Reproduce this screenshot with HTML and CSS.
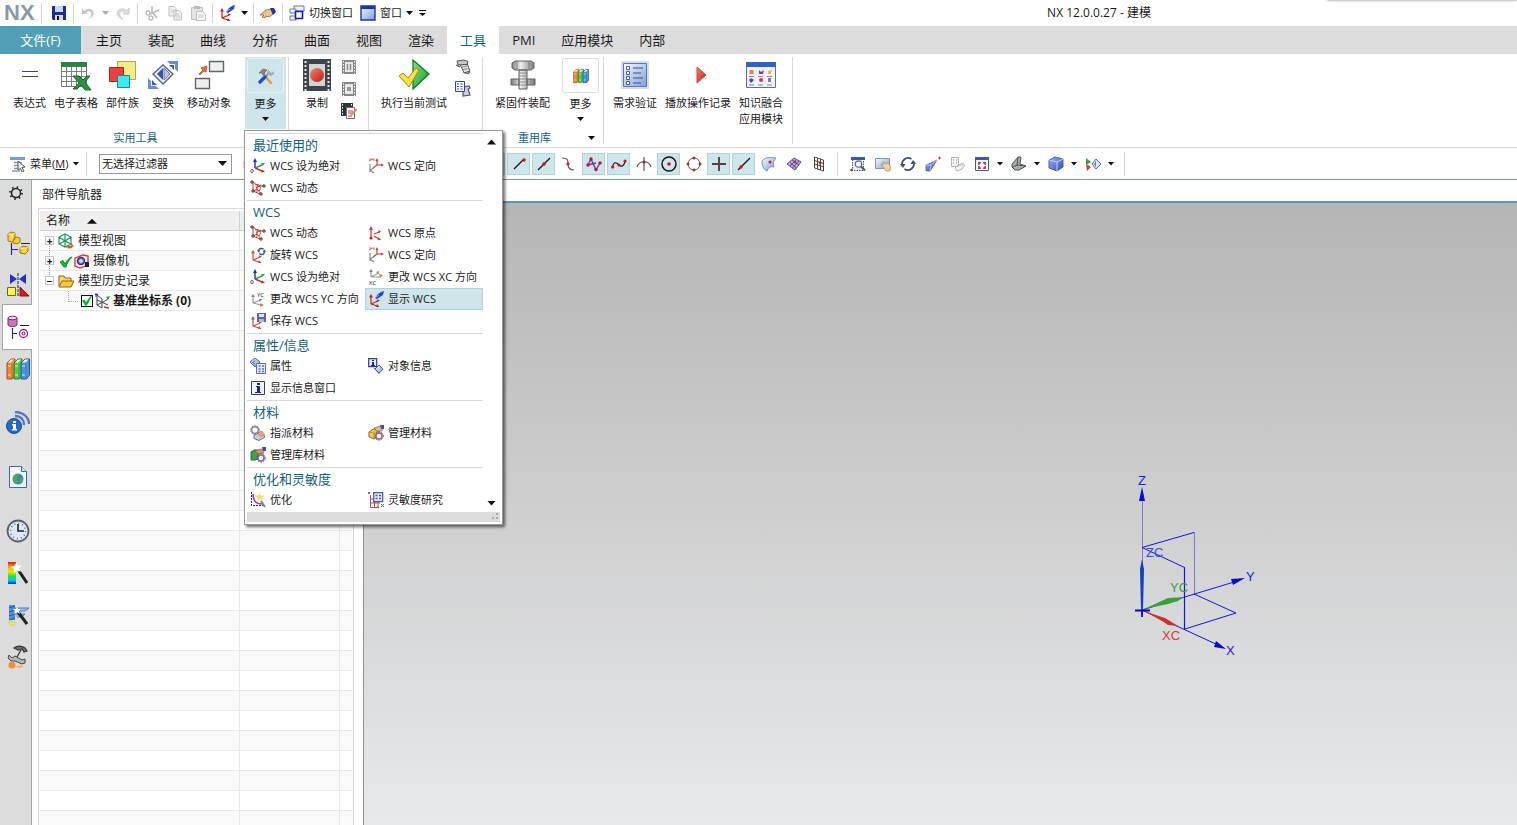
FILE: index.html
```html
<!DOCTYPE html>
<html lang="zh-CN">
<head>
    <meta charset="UTF-8">
    <meta name="viewport" content="width=device-width, initial-scale=1.0">
    <title>NX 12.0.0.27 - 建模</title>
    <link rel="stylesheet" href="styles.css">
</head>
<body>
    <!-- 图标库 -->
    <svg class="icon-defs" aria-hidden="true">
        <defs>
            <linearGradient id="g-blue" x1="0" y1="0" x2="1" y2="1"><stop offset="0" stop-color="#f4f8ff"/><stop offset="1" stop-color="#7e9fdc"/></linearGradient>
            <linearGradient id="g-deep" x1="0" y1="0" x2="1" y2="1"><stop offset="0" stop-color="#9db4f4"/><stop offset="1" stop-color="#3448b4"/></linearGradient>
            <linearGradient id="g-green" x1="0" y1="0" x2="1" y2="1"><stop offset="0" stop-color="#8ce08c"/><stop offset="1" stop-color="#0c9a28"/></linearGradient>
            <linearGradient id="g-red" x1="0" y1="0" x2="1" y2="1"><stop offset="0" stop-color="#f08070"/><stop offset="1" stop-color="#c01c14"/></linearGradient>
            <linearGradient id="g-steel" x1="0" y1="0" x2="1" y2="0"><stop offset="0" stop-color="#777"/><stop offset=".4" stop-color="#eee"/><stop offset="1" stop-color="#777"/></linearGradient>
            <linearGradient id="g-rainbow" x1="0" y1="0" x2="0" y2="1"><stop offset="0" stop-color="#f01010"/><stop offset=".25" stop-color="#ffb000"/><stop offset=".45" stop-color="#e8f000"/><stop offset=".65" stop-color="#20e040"/><stop offset=".82" stop-color="#10c8f0"/><stop offset="1" stop-color="#1030f0"/></linearGradient>
        </defs>

        <!-- 快速访问 -->
        <symbol id="save" viewBox="0 0 16 16"><path d="M1 1h14v14H2l-1-1z" fill="#1c2c90"/><path d="M4 1h8v6H4z" fill="#c8d8f4"/><path d="M4 10h8v5H4z" fill="#d8d8d8"/><path d="M6 11h2v4H6z" fill="#111"/></symbol>
        <symbol id="undo" viewBox="0 0 16 16"><path d="M2 3v6h6L6 7c3-2 6 0 5 3 0 2-1 3-3 4 5-1 7-5 5-8-2-3-6-3-9 0z" fill="#c6c6c6"/></symbol>
        <symbol id="redo" viewBox="0 0 16 16"><path d="M14 3v6H8l2-2C7 5 4 7 5 10c0 2 1 3 3 4C3 13 1 9 3 6c2-3 6-3 9 0z" fill="#e0e0e0" stroke="#bbb" stroke-width=".7"/></symbol>
        <symbol id="cut" viewBox="0 0 16 16"><path d="M8 1v8M15 5L6 9M9 8l4 5" fill="none" stroke="#bdbdbd" stroke-width="1.6"/><circle cx="4" cy="8" r="2" fill="none" stroke="#bdbdbd" stroke-width="1.4"/><circle cx="7" cy="13" r="2" fill="none" stroke="#bdbdbd" stroke-width="1.4"/></symbol>
        <symbol id="copy" viewBox="0 0 16 16"><path d="M2 1.500h5l2 2V11H2zM7 5.500h5l2.500 2.500v7H7z" fill="#f2f2f2" stroke="#bebebe"/><path d="M9 9h3M9 11h4M9 13h4M3.500 5h3M3.500 7h3" stroke="#c8c8c8"/></symbol>
        <symbol id="paste" viewBox="0 0 16 16"><path d="M1.500 2.500h11v12h-11z" fill="#e4e4e4" stroke="#bebebe"/><path d="M4 1h6v3H4z" fill="#bbb"/><path d="M6.500 6.500h6l3 3v6h-9z" fill="#f6f6f6" stroke="#bebebe"/><path d="M8 10h5M8 12h5" stroke="#c4c4c4"/></symbol>
        <symbol id="hand" viewBox="0 0 16 16"><path d="M0 10l6-5 5-1 2 5-4 3-3-1-1 2-3-1 2-2z" fill="#f0c48c" stroke="#7a5530" stroke-width=".7"/><path d="M10 3h4l2 4-3 3z" fill="#1c34b0"/></symbol>
        <symbol id="switch" viewBox="0 0 16 16"><path d="M5 1h10v5H5z" fill="#eef2f8" stroke="#667c98"/><path d="M1 4h6v4H1zM1 11h6v4H1z" fill="#eef2f8" stroke="#667c98"/><path d="M6.500 6.500h7v7h-7z" fill="#fff" stroke="#1020c0" stroke-width="1.600"/></symbol>
        <symbol id="window" viewBox="0 0 16 16"><path d="M1 1h14v14H1z" fill="url(#g-blue)" stroke="#1838a8" stroke-width="1.400"/><path d="M1 1h14v3H1z" fill="#1838a8"/></symbol>

        <!-- WCS 系列 -->
        <symbol id="tripod" viewBox="0 0 16 16"><path d="M3 13V5M3 13l7-3M3 13l6 2" fill="none" stroke="currentColor" stroke-width="1.200"/><path d="M3 3L1 6.500h4zM12 9L8.500 8.500l1 2.800zM11.500 16L8 16l1-3z" fill="currentColor"/></symbol>
        <symbol id="wcs-abs" viewBox="0 0 16 16"><path d="M5 10V3" stroke="#2030b0" stroke-width="1.400"/><path d="M5 0L3 4h4z" fill="#2030b0"/><path d="M5 10l7-3" stroke="#30a050" stroke-width="1.400"/><path d="M15 5l-4 0 1.500 3z" fill="#30a050"/><path d="M5 10l7 3" stroke="#c82828" stroke-width="1.400"/><path d="M15 14l-4 .5 1.400-3z" fill="#c82828"/><ellipse cx="2" cy="13" rx="1.200" ry="1.800" fill="none" stroke="#555" stroke-width=".9"/></symbol>
        <symbol id="wcs-orient" viewBox="0 0 16 16"><path d="M9 7V2M9 7h5M9 7l-4 3" stroke="#c43c3c" stroke-width="1.200" fill="none"/><path d="M9 0L7.500 3h3zM16 7l-3-1.500v3z" fill="#c43c3c"/><path d="M1 1h5v2M1 3l4-2" stroke="#e08060" fill="none" stroke-width="1.200"/><path d="M2 6v8M2 12l4-2M2 12l4 3" stroke="#888" fill="none" stroke-width="1.200"/></symbol>
        <symbol id="wcs-dyn" viewBox="0 0 16 16"><path d="M3 2l5 4 5 0M3 11V3M3 11l4-2 4 5M3 11l7 3M5 5c5-2 7 3 4 6M6 8l5-3M7 6v6" stroke="#c03830" fill="none"/><path d="M1 1h2v2H1zM13 5h2v2h-2zM2 10h2v2H2zM10 13h2v2h-2z" fill="#fff" stroke="#4a3020"/></symbol>
        <symbol id="wcs-origin" viewBox="0 0 16 16"><path d="M3 12V4M6 9l5-2M6 11l5 3" stroke="#c43c3c" fill="none" stroke-width="1.200"/><path d="M3 1L1 5h4zM13 6l-3-.5 1 3zM13 15l-3.500 0 1-3z" fill="#c43c3c"/><circle cx="3" cy="13" r="1.600" fill="#d02020"/></symbol>
        <symbol id="wcs-rotate" viewBox="0 0 16 16"><use href="#tripod" color="#c45048"/><circle cx="11.500" cy="4.500" r="3" fill="none" stroke="#3c58a8" stroke-width="1.400" stroke-dasharray="7 2"/><path d="M7 3l3 0-1 3zM16 5l-3 0 1-3z" fill="#3c58a8"/></symbol>
        <symbol id="wcs-show" viewBox="0 0 16 16"><use href="#tripod" color="#c82020"/><path d="M7 7l3-4 3-2 3-1-1 4-3 2-3 2z" fill="#2848c8"/><path d="M7 7l4-3" stroke="#9ab4ff"/></symbol>
        <symbol id="wcs-save" viewBox="0 0 16 16"><use href="#tripod" color="#c45048"/><path d="M7 0h9v9H7z" fill="#5c689c"/><path d="M9 1h5v3H9z" fill="#dfe6f6"/><path d="M9 6h5v3H9z" fill="#bbb"/></symbol>

        <!-- 菜单其它图标 -->
        <symbol id="prop" viewBox="0 0 16 16"><path d="M5 0l5 4-5 5-5-5z" fill="url(#g-blue)" stroke="#4c5890"/><path d="M5 2.500L3 4.500 5 6.500" fill="none" stroke="#223080"/><path d="M6.500 5.500h9v10h-9z" fill="#e4eafa" stroke="#5c6cb0"/><path d="M8.500 8h2M8.500 11h2M8.500 13.500h2M12 8h2M12 11h2M12 13.500h2" stroke="#6070b0" stroke-width="1.400"/></symbol>
        <symbol id="objinfo" viewBox="0 0 16 16"><path d="M.700.700h8v8h-8z" fill="#e4eafa" stroke="#343c80" stroke-width="1.200"/><path d="M4 2h2v1H4zM4 4h2v3h1v1H3V7h1z" fill="#202860"/><path d="M11 7l4 4-4 4.500-4-4.500z" fill="url(#g-blue)" stroke="#4c5890"/><path d="M6 10l5 5" stroke="#4c5890"/></symbol>
        <symbol id="info" viewBox="0 0 16 16"><path d="M1.500 1.500h13v13h-13z" fill="#eef0fa" stroke="#343c80"/><path d="M7 3h3v2H7zM6 6h4v6h1v1H5v-1h2V7H6z" fill="#202860"/></symbol>
        <symbol id="mat-assign" viewBox="0 0 16 16"><path d="M4 10l7-3 4 5-6 3.500-5-2z" fill="#c4ccd8" stroke="#6c7480"/><path d="M7 8l5-2 3 4-4 1.500z" fill="#f0a070" stroke="#a07050" stroke-width=".5"/><circle cx="5" cy="5" r="3.300" fill="#fff" stroke="#9c7c90" stroke-width="1.400"/><circle cx="5" cy="5" r="4.300" fill="none" stroke="#6c6c88" stroke-width="1" stroke-dasharray="1.500 1.200"/></symbol>
        <symbol id="mat-manage" viewBox="0 0 16 16"><path d="M1 7l4-3 6 1v6l-5 3-5-2z" fill="#f0c848" stroke="#8c6c20"/><path d="M1 7l5 1 5-3M6 8v6" fill="none" stroke="#b08c30" stroke-width=".7"/><path d="M6 3l6-2 3 1-1 4-5 0z" fill="#e8b890" stroke="#705040" stroke-width=".6"/><path d="M12 0h4v4h-3z" fill="#3c50b0"/><circle cx="11" cy="11" r="3" fill="#fff" stroke="#a06080" stroke-width="1.500"/><circle cx="11" cy="11" r="4.200" fill="none" stroke="#5c5088" stroke-width="1" stroke-dasharray="1.500 1.200"/></symbol>
        <symbol id="mat-lib" viewBox="0 0 16 16"><path d="M1 5l3-2h4v9l-3 1H1z" fill="#40a048" stroke="#286830"/><path d="M5 4l6-2 3 1-1 4-5 0z" fill="#d8905c" stroke="#705040" stroke-width=".6"/><path d="M12 0h4v4h-3z" fill="#3c50b0"/><circle cx="11" cy="11" r="3" fill="#fff" stroke="#8068b0" stroke-width="1.500"/><circle cx="11" cy="11" r="4.200" fill="none" stroke="#5c5088" stroke-width="1" stroke-dasharray="1.500 1.200"/></symbol>
        <symbol id="optim" viewBox="0 0 16 16"><path d="M1.500 0v13.500H14" fill="none" stroke="#333" stroke-dasharray="2 1"/><path d="M3 2c0 7 3 10 9 10" fill="none" stroke="#b83890" stroke-width="1.600"/><path d="M10 1l1 3 4-1-3 3 2 3-4-2-3 2 1-3-3-2 4-1z" fill="#ece060"/><path d="M11 9l4 6" stroke="#7080d0" stroke-width="2"/></symbol>
        <symbol id="sens" viewBox="0 0 16 16"><path d="M2.500 3v12.500H11M2.500 7H6M2.500 11H12M6.500 5v10M10 10v5" fill="none" stroke="#b05048"/><path d="M5.700.700h9v9h-9z" fill="#e4eafa" stroke="#4c549c" stroke-width="1.200"/><path d="M7.500 3.500h2M11 3.500h2M7.500 6.500h2M11 6.500h2" stroke="#4c549c" stroke-width="1.600"/><path d="M0 0l1 2 1-2M13 12l3 3M16 12l-3 3" stroke="#333" fill="none" stroke-width=".8"/></symbol>

        <!-- 功能区大图标 -->
        <symbol id="expr" viewBox="0 0 32 32"><path d="M8 12.500h16M8 17.500h16" stroke="#3c4468" stroke-width="1.200"/></symbol>
        <symbol id="sheet" viewBox="0 0 32 32"><path d="M1.500 3.500h25v24h-25z" fill="#fff" stroke="#777"/><path d="M1.500 12.500h25M1.500 17.500h25M1.500 22.500h25M6.500 8v19.500M11.500 8v19.500M16.500 8v19.500M21.500 8v19.500" stroke="#808080"/><path d="M1 3h26v5H1z" fill="#2e8040"/><path d="M13 17h6l4 4 4-4h3l-5 6 6 8h-6l-4-5-4 4h-4l6-6z" fill="#2f9048" stroke="#1f6830"/></symbol>
        <symbol id="family" viewBox="0 0 32 32"><path d="M10.500 2.500h18v18h-18z" fill="#f0ee88" stroke="#b0a850"/><path d="M2.500 8.500h14v14h-14z" fill="#ee4040" stroke="#a02828"/><path d="M10.500 16.500h12v12h-12z" fill="#3cecec" stroke="#208888"/></symbol>
        <symbol id="transform" viewBox="0 0 32 32"><path d="M16 6l10 9-10 10L6 15z" fill="#e8edf8" stroke="#5a6488" stroke-width="1.400"/><path d="M16 9v12l-6-6z" fill="#3c50a8"/><path d="M17 9v12l6-6z" fill="#b8c6ea" stroke="#56649c" stroke-width=".8"/><path d="M20 2h11v11l-3-3V5h-5zM1 19l3 3v5h5l3 3H1z" fill="#6c8cd4"/><path d="M22 6h5v5l-2-2V8h-1zM5 21l2 2v1h1l2 2H5z" fill="#3c5cb4"/></symbol>
        <symbol id="move" viewBox="0 0 32 32"><path d="M16.500 2.500h14v10h-14zM2.500 19.500h14v10h-14z" fill="#eee" stroke="#606864" stroke-width="1.400"/><path d="M6 15l4-4-2-2 6-2-1 6-2-1-4 4z" fill="#e87038" stroke="#a04820" stroke-width=".7"/></symbol>
        <symbol id="tools" viewBox="0 0 16 16"><path d="M5 6l8 9" stroke="#e0a030" stroke-width="2.600" stroke-linecap="round"/><path d="M1 5l4-4 4 1-2 2-1 3-2-2z" fill="#888" stroke="#555" stroke-width=".6"/><path d="M12 4L7 9" stroke="#999" stroke-width="2"/><path d="M11 1v3l3 1 2-2v3l-3 2-3-1-1-3z" fill="#aaa"/><path d="M7 9l-5 5" stroke="#1c48d8" stroke-width="3.200" stroke-linecap="round"/></symbol>
        <symbol id="record" viewBox="0 0 32 32"><path d="M2 0h28v32H2z" fill="#3e4448"/><path d="M4.500 2v30M27.500 2v30" stroke="#e8e8e8" stroke-width="2" stroke-dasharray="2 2"/><path d="M8 5h16v22H8z" fill="#ced6d6"/><circle cx="16" cy="16" r="7" fill="url(#g-red)"/></symbol>
        <symbol id="film-pause" viewBox="0 0 16 16"><path d="M1 1h14v14H1z" fill="#888"/><path d="M2.500 2v13M13.500 2v13" stroke="#fff" stroke-dasharray="1.500 1.500"/><path d="M4 3h8v10H4z" fill="#e8e8e8"/><path d="M6.500 5v6M9.500 5v6" stroke="#888" stroke-width="1.400"/></symbol>
        <symbol id="film-stop" viewBox="0 0 16 16"><path d="M1 1h14v14H1z" fill="#888"/><path d="M2.500 2v13M13.500 2v13" stroke="#fff" stroke-dasharray="1.500 1.500"/><path d="M4 3h8v10H4z" fill="#e8e8e8"/><path d="M6 6h4v4H6z" fill="#999"/></symbol>
        <symbol id="film-edit" viewBox="0 0 16 16"><path d="M0 0h12v13H0z" fill="#333"/><path d="M1.500 1v12M10.500 1v3" stroke="#fff" stroke-dasharray="1.500 1.500"/><path d="M5.500 4.500h8v11h-8z" fill="#fff" stroke="#6c6ca0"/><path d="M7 8h5M7 10h5M7 13h4" stroke="#c04030"/><path d="M16 6l-6 6" stroke="#e09030" stroke-width="2"/></symbol>
        <symbol id="run-test" viewBox="0 0 32 32"><path d="M15 1l16 14-16 15z" fill="url(#g-green)" stroke="#0c7820" stroke-width="1.200"/><path d="M1 17l4-3 5 5L18 9l3 2L11 28z" fill="#f8e048" stroke="#a88818"/></symbol>
        <symbol id="journal" viewBox="0 0 16 16"><path d="M5 5l7-1 3 8-6 2z" fill="#e0e0e4" stroke="#55555c"/><path d="M2 2l7-1 4 1.500-1 3-3 0L3 6z" fill="#c4c4ca" stroke="#55555c"/><path d="M7 8l5-1M8 10.500l5-1" stroke="#88888e"/><path d="M1 6l4 2M9 13.500l4 1 2-2" stroke="#55555c" fill="none" stroke-width="1.200"/></symbol>
        <symbol id="journal-list" viewBox="0 0 16 16"><path d="M8 6l6-1 1 2-2 1 2 6-7 1z" fill="#d0d0d4" stroke="#55555c" stroke-width="1.200"/><path d="M.500.500h9v10h-9z" fill="#f0f4ff" stroke="#3c4498"/><path d="M2 3h2M2 5.500h2M2 8h2M5.500 3h2M5.500 5.500h2M5.500 8h2" stroke="#3c58b8"/></symbol>
        <symbol id="bolt" viewBox="0 0 32 32"><path d="M5 4l3-2h16l3 2v5l-3 2H8L5 9zM12 11h8v19h-8zM4 20h8v6H4zM20 20h8v6h-8z" fill="url(#g-steel)" stroke="#606060"/><path d="M10 2v9M22 2v9M12 14h8M12 17h8M12 20h8M12 23h8M12 26h8" stroke="#777" stroke-width=".8"/></symbol>
        <symbol id="books" viewBox="0 0 24 24"><path d="M1 6l4-4h4v16l-3 4H1z" fill="#f08838" stroke="#a05010"/><path d="M8 6l4-4h4v16l-3 4H8z" fill="#58c848" stroke="#207c20"/><path d="M15 6l4-4h4.500v16l-3 4H15z" fill="#4c94e0" stroke="#1c509c"/><path d="M2 5.500l3-3h3l-3 3zM9 5.500l3-3h3l-3 3zM16 5.500l3-3h3.500l-3 3z" fill="#fff4e8"/><path d="M6 7v14M13 7v14M20 7v14" stroke="#345" stroke-opacity=".4" stroke-width=".8"/><path d="M2 9h3M9 9h3M16 9h3M2 18h3M9 18h3M16 18h3" stroke="#fff" stroke-opacity=".8"/></symbol>
        <symbol id="require" viewBox="0 0 32 32"><path d="M2 2h28v28H2z" fill="#d8dce6"/><path d="M4.500 4.500h23v23h-23z" fill="url(#g-blue)" stroke="#5a78b0"/><path d="M7.500 7.500h3v3h-3zM7.500 12.500h3v3h-3zM7.500 17.500h3v3h-3zM7.500 22.500h3v3h-3z" fill="#fff" stroke="#4c6090"/><path d="M14 9h10M14 14h8M14 19h10M14 24h8" stroke="#3c5080" stroke-width="1.200"/></symbol>
        <symbol id="play" viewBox="0 0 32 32"><path d="M15 8l9 8-9 8z" fill="url(#g-red)" stroke="#d04040"/></symbol>
        <symbol id="knowledge" viewBox="0 0 32 32"><path d="M1.500 3.500h29v25h-29z" fill="#eef2fc" stroke="#5c6ca8"/><path d="M1 3h30v5H1z" fill="#3060c8"/><path d="M4.500 11h4v4h-4z" fill="#f08030"/><path d="M14 15v-4l2 2 3-2-1 4z" fill="#a03080"/><path d="M23 12l4-1-1 4h-3z" fill="#f0b838"/><path d="M6 19l3 2-3 3-2-3z" fill="#5838d0"/><circle cx="16" cy="21" r="2" fill="#d03848"/><path d="M23 19h3v4h-3z" fill="#a86888"/><path d="M4 17.500h5M13 17.500h5M22 17.500h5M4 26h5M13 26h5M22 26h5" stroke="#888"/></symbol>

        <!-- 选择条 -->
        <symbol id="menu-icon" viewBox="0 0 16 16"><path d="M0 1h15v3H0z" fill="#7c9cd0"/><path d="M4 6.500h8M4 9.500h8M4 12.500h7M2 15h8" stroke="#8c98a8" stroke-width="1.400"/><path d="M8 5l7 6-3 .5 2 3.500-2 1-1.500-3.500L8 14z" fill="#eee" stroke="#555"/></symbol>
        <symbol id="cube-dim" viewBox="0 0 16 16"><path d="M2 5l6-3 6 3v7l-6 3-6-3zM2 5l6 3 6-3M8 8v7" fill="#f2f2f2" stroke="#b0b0b0"/></symbol>
        <symbol id="s-end" viewBox="0 0 16 16"><path d="M3 13L12 4" stroke="#111" stroke-width="1.200"/><circle cx="13" cy="4" r="1.700" fill="#c81818"/></symbol>
        <symbol id="s-mid" viewBox="0 0 16 16"><path d="M2 14L14 2" stroke="#111" stroke-width="1.200"/><circle cx="8" cy="8" r="1.800" fill="#c81818"/></symbol>
        <symbol id="s-ctrl" viewBox="0 0 16 16"><path d="M1 2c6 0 6 2 6 6s2 6 6 6" fill="none" stroke="#555" stroke-width="1.200"/><circle cx="7" cy="8" r="1.600" fill="#c81818"/></symbol>
        <symbol id="s-poly" viewBox="0 0 16 16"><path d="M2 9L5 3l5 11 4-7M2 9l8-2" fill="none" stroke="#7038b0" stroke-width="1.400"/><g fill="#b81838"><circle cx="2" cy="9" r="1.700"/><circle cx="5" cy="3" r="1.700"/><circle cx="10" cy="13.500" r="1.700"/><circle cx="14" cy="7" r="1.700"/></g></symbol>
        <symbol id="s-spline" viewBox="0 0 16 16"><path d="M1 12c2-8 5-5 7-3s5 2 6-4" fill="none" stroke="#111" stroke-width="1.200"/><g fill="#c81818"><circle cx="1.700" cy="11" r="1.600"/><circle cx="8" cy="9" r="1.600"/><circle cx="14" cy="5" r="1.600"/></g></symbol>
        <symbol id="s-int" viewBox="0 0 16 16"><path d="M1 11c2-7 12-7 14 0M8 1v14" fill="none" stroke="#555" stroke-width="1.200"/><circle cx="8" cy="6" r="1.600" fill="#c81818"/></symbol>
        <symbol id="s-center" viewBox="0 0 16 16"><circle cx="8" cy="8" r="7" fill="none" stroke="#111" stroke-width="1.400"/><circle cx="8" cy="8" r="1.800" fill="#c81818"/></symbol>
        <symbol id="s-quad" viewBox="0 0 16 16"><circle cx="8" cy="8" r="6" fill="none" stroke="#555"/><g fill="#c82828"><circle cx="8" cy="2" r="1.500"/><circle cx="8" cy="14" r="1.500"/><circle cx="2" cy="8" r="1.500"/><circle cx="14" cy="8" r="1.500"/></g></symbol>
        <symbol id="s-point" viewBox="0 0 16 16"><path d="M8 1v14M1 8h14" stroke="#111" stroke-width="1.400"/><circle cx="8" cy="8" r="1.500" fill="#c81818"/></symbol>
        <symbol id="s-oncurve" viewBox="0 0 16 16"><path d="M2 14L14 2" stroke="#111" stroke-width="1.200"/><circle cx="5" cy="11" r="1.700" fill="#c81818"/></symbol>
        <symbol id="s-face" viewBox="0 0 16 16"><path d="M1 5c3-4 8-4 14-3-3 3-3 6-2 9-4-1-6 1-7 4-4-2-5-6-5-10z" fill="url(#g-blue)" stroke="#7890c0"/><circle cx="9" cy="6" r="1.500" fill="#c82828"/></symbol>
        <symbol id="s-facet" viewBox="0 0 16 16"><path d="M8 2l7 4-6 8-8-6z" fill="#b8b0dc" stroke="#58489c"/><path d="M6 4l7 5M3.500 6l7 6M10.500 3.500L4 10M13 5L6.500 12" stroke="#58489c"/><circle cx="9" cy="6" r="1.400" fill="#c82828"/></symbol>
        <symbol id="s-grid" viewBox="0 0 16 16"><path d="M3.500 1l9 3v11l-9-3zM3.500 4.500l9 3M3.500 8l9 3M6.500 2v11M9.500 3v11" fill="none" stroke="#444"/><circle cx="9" cy="7" r="1.400" fill="#c82828"/></symbol>
        <symbol id="v-fit" viewBox="0 0 16 16"><path d="M2.500 3.500h11v11h-11z" fill="#e8eef8" stroke="#3858b0" stroke-dasharray="1.500 1"/><path d="M1 1h14v3H1z" fill="#3858b0"/><circle cx="8.500" cy="8" r="3.200" fill="#fff" stroke="#667" stroke-width="1.200"/><path d="M11 10.500l4 4" stroke="#556" stroke-width="2"/><circle cx="1.500" cy="14" r="1.300" fill="#d02828"/></symbol>
        <symbol id="v-pan" viewBox="0 0 16 16"><path d="M.500 2.500h14v10h-14z" fill="url(#g-blue)" stroke="#8890b0"/><path d="M6 8l2 1V6l1.500 0 1 2L13 7l2.500 3-.5 5h-4z" fill="#f0d0a0" stroke="#b08850" stroke-width=".7"/></symbol>
        <symbol id="v-rotate" viewBox="0 0 16 16"><path d="M2.500 10a6 6 0 0 1 9-7M13.500 6a6 6 0 0 1-9 7" fill="none" stroke="#3c5080" stroke-width="1.800"/><path d="M0 8h5.500L3 12zM16 8h-5.500L13 4z" fill="#3c5080"/></symbol>
        <symbol id="v-persp" viewBox="0 0 16 16"><path d="M1 9l5-2 6-3-5 8-2 3H1z" fill="url(#g-deep)" stroke="#3c4c98" stroke-width=".7"/><path d="M1 9h5l6-5M6 9l-1 6" fill="none" stroke="#dfe6ff" stroke-width=".7"/><path d="M13 2h3M14.500.500v3" stroke="#d04040"/></symbol>
        <symbol id="v-dim" viewBox="0 0 16 16"><path d="M1.500 1.500h7v9h-7zM5 12l3-3h7l-3 4-5 2zM8 9l6-2" fill="#f4f4f4" stroke="#b4b4b4"/><path d="M3 4h1M6 4h1M3 7h1M6 7h1" stroke="#aaa" stroke-width="1.400"/></symbol>
        <symbol id="v-full" viewBox="0 0 16 16"><path d="M1.500 1.500h13v13h-13z" fill="#f4f6ff" stroke="#3c58b0"/><path d="M1 1h14v3H1z" fill="#3c58b0"/><path d="M4 6h3v1L5 9H4zM12 6H9v1l2 2h1zM4 13h3v-1l-2-2H4zM12 13H9v-1l2-2h1z" fill="#d04030"/></symbol>
        <symbol id="v-clip" viewBox="0 0 16 16"><path d="M1 8l6-7 3 0-1 7 6 2-7 4H4L1 11z" fill="#a8acac" stroke="#505454"/><path d="M7 1L6 9l9 1M1 11l6-2" fill="none" stroke="#505454"/></symbol>
        <symbol id="v-cube" viewBox="0 0 16 16"><path d="M1 4l6-3 8 2v8l-6 4-8-3z" fill="url(#g-deep)" stroke="#4c5ca8"/><path d="M1 4l8 2 6-3M9 6v9" fill="none" stroke="#c4d0f4"/></symbol>
        <symbol id="v-section" viewBox="0 0 16 16"><path d="M1 2l5 4-5 3z" fill="#30a040"/><path d="M1 8l5 3-4 4z" fill="#d03830"/><path d="M11 3l5 5-5 5-4-5z" fill="#dce6f6" stroke="#5c6c98"/><path d="M11 5v6L9 8z" fill="#5c78b8"/></symbol>

        <!-- 导航树 -->
        <symbol id="t-view" viewBox="0 0 16 16"><path d="M7 1l6 3v7l-6 3-6-3V4zM1 4l6 4 6-4M7 1v13M1 11l6-3 6 3" fill="none" stroke="#1c9860" stroke-width="1.200"/><path d="M8 14l7-1-2-2M10 15l4-1" stroke="#d85830" fill="none" stroke-width="1.400"/></symbol>
        <symbol id="t-check" viewBox="0 0 16 16"><path d="M2 9l3-1.500L7 11c2-4 4-6 7-7-3 3-5 6-6 10H6z" fill="#18b838" stroke="#109028"/></symbol>
        <symbol id="t-camera" viewBox="0 0 16 16"><path d="M1 5l8-3 5 1v9l-8 3-5-2z" fill="#fbe8e8" stroke="#c83838" stroke-width="1.300"/><circle cx="7" cy="8" r="3.500" fill="#7888d8" stroke="#283088" stroke-width="1.400"/><path d="M11 9h4v5h-4z" fill="#222"/><path d="M5 8h4M7 6v4" stroke="#fff"/></symbol>
        <symbol id="t-folder" viewBox="0 0 16 16"><path d="M1 13V3h5l1 2h6v3" fill="#f8d868" stroke="#8c6410"/><path d="M1 14l3-6h12l-3 6z" fill="#fcc840" stroke="#8c6410"/></symbol>
        <symbol id="t-csys" viewBox="0 0 16 16"><path d="M2 2v10l5 3V6zM2 12l8-4 4-3M2 7l11 5" fill="none" stroke="#444"/><path d="M1 0v4M0 1.500h3" stroke="#2838c0"/><path d="M15 3l-4 1 2 3z" fill="#28a040"/><path d="M9 14l5 1" stroke="#d03030" stroke-width="1.600"/></symbol>

        <!-- 资源条 -->
        <symbol id="r-gear" viewBox="0 0 16 16"><circle cx="8" cy="8" r="4.500" fill="none" stroke="#222" stroke-width="1.500"/><circle cx="8" cy="8" r="6" fill="none" stroke="#222" stroke-width="1.800" stroke-dasharray="1.500 3.210"/></symbol>
        <symbol id="r-asm" viewBox="0 0 24 24"><path d="M2 3l3-2 4 1v6l-3 3-4-1zM7 8l3-2 4 1v4l-3 2-4-1zM14 17l3-2 5 1v4l-3 3-5-1z" fill="#f8cc30" stroke="#a07c10"/><path d="M2 3l4 1 3-2M6 4v6M14 17l5 1 3-2M19 18v4" fill="none" stroke="#fff0a0"/><path d="M5.500 12v12M6 18.500h6" stroke="#2028a0" stroke-width="1.200"/><path d="M15 12.500h9" stroke="#222"/></symbol>
        <symbol id="r-constraint" viewBox="0 0 24 24"><path d="M4 1l7 5-7 5zM20 1l-7 5 7 5z" fill="#2030c8"/><path d="M12 0v24" stroke="#222" stroke-dasharray="3 1"/><path d="M1.500 14.500h8v8h-8z" fill="#fcf440" stroke="#6c6820"/><path d="M14 14v9h9z" fill="#d02020" stroke="#901010"/></symbol>
        <symbol id="r-part" viewBox="0 0 24 24"><path d="M1 3v7c1 2 8 2 9 0V3z" fill="#c878b8" stroke="#7c2870"/><ellipse cx="5.500" cy="3" rx="4.500" ry="1.800" fill="#f4d0ec" stroke="#7c2870"/><path d="M5.500 13v11M6 18.500h4" stroke="#2028a0" stroke-width="1.200"/><path d="M13 10.500h9" stroke="#222"/><circle cx="16.500" cy="18.500" r="4" fill="#fff" stroke="#a02880" stroke-width="1.300"/><circle cx="16.500" cy="18.500" r="1.500" fill="none" stroke="#a02880" stroke-width="1.200"/></symbol>
        <symbol id="r-web" viewBox="0 0 24 24"><path d="M9 5c6 0 9 4 9 9M9 1c8 0 14 5 14 12" fill="none" stroke="#5078c0" stroke-width="2.400"/><circle cx="8" cy="15" r="7.500" fill="#2468c8" stroke="#184c9c"/><path d="M7 10h3v2H7zM6 13h4v5h1v1.500H6V18h1v-3.500H6z" fill="#fff"/></symbol>
        <symbol id="r-page" viewBox="0 0 24 24"><path d="M3.500 1.500h12l5 5v16h-17z" fill="#f4f8ff" stroke="#3c68b0"/><path d="M15.500 1.500v5h5" fill="#cfe0fa" stroke="#3c68b0"/><circle cx="12" cy="14" r="5.500" fill="#3c80c8"/><path d="M8 11c2-2 4-2 5-1l-2 3 1 3-2 3c-3-1-4-5-2-8zM14 12l3 1-1 4-3 1z" fill="#48b048"/></symbol>
        <symbol id="r-clock" viewBox="0 0 24 24"><circle cx="12" cy="12" r="10.500" fill="#dce8f6" stroke="#5c6068" stroke-width="1.800"/><circle cx="12" cy="12" r="7.500" fill="none" stroke="#667" stroke-width="1.600" stroke-dasharray="1 2.927"/><path d="M12 5v7h6" fill="none" stroke="#222" stroke-width="1.600"/></symbol>
        <symbol id="r-color" viewBox="0 0 24 24"><path d="M2 1h8v22H2z" fill="url(#g-rainbow)"/><path d="M11 7l10 15" stroke="#222" stroke-width="3"/><path d="M11 7l2 3" stroke="#fff" stroke-width="3"/><path d="M11 1l1 4 4-1-3 3 2 4-4-2-3 3 0-4-4-2 4-1z" fill="#fff"/></symbol>
        <symbol id="r-render" viewBox="0 0 24 24"><path d="M3 2h6v15H3z" fill="#4c90d8"/><path d="M3 5l6-2M3 9l6-2M3 13l6-2M3 17l6-2" stroke="#1c5aa8"/><path d="M9 5h14l-4 3h-9M9 11h10l-3 3h-5" fill="#9cbce8" stroke="#4878c0"/><path d="M2 20l4-2 4 2M4 22h5" stroke="#e8d840" fill="none" stroke-width="1.600"/><path d="M12 9l9 12" stroke="#222" stroke-width="3"/><path d="M11 3l1 3 3 0-2 2 1 3-3-2-3 2 1-3-2-2 3 0z" fill="#fff"/></symbol>
        <symbol id="r-tools" viewBox="0 0 24 24"><path d="M8 3c4-3 8-2 11 0l2 3-3 1-2-3-4 1zM15 5l-4 7" fill="#777" stroke="#333" stroke-width="1.200"/><path d="M3 10l3 3 3-2 7 4 3-1 0 4-3 1-7-3-4 0-3-3z" fill="#b0b8bc" stroke="#444"/><circle cx="6" cy="20" r="3.500" fill="#f09030"/><path d="M8 22l7-2 3 2-4 1z" fill="#f0b070"/></symbol>
    </svg>

    <!-- 标题栏 -->
    <header class="titlebar">
        <span class="logo">NX</span>
        <div class="quick">
            <button aria-label="保存"><svg><use href="#save"/></svg></button>
        </div>
        <div class="quick">
            <button aria-label="撤消"><svg><use href="#undo"/></svg></button>
            <button class="drop" aria-label="撤消列表"><i class="caret caret-dim"></i></button>
            <button aria-label="重做"><svg><use href="#redo"/></svg></button>
        </div>
        <div class="quick">
            <button aria-label="剪切"><svg><use href="#cut"/></svg></button>
            <button aria-label="复制"><svg><use href="#copy"/></svg></button>
            <button aria-label="粘贴"><svg><use href="#paste"/></svg></button>
        </div>
        <div class="quick">
            <button aria-label="显示 WCS"><svg><use href="#wcs-show"/></svg></button>
            <button class="drop" aria-label="重复命令"><i class="caret"></i></button>
        </div>
        <div class="quick">
            <button aria-label="触控"><svg><use href="#hand"/></svg></button>
        </div>
        <div class="quick last">
            <button class="with-text"><svg><use href="#switch"/></svg>切换窗口</button>
            <button class="with-text"><svg><use href="#window"/></svg>窗口<i class="caret"></i></button>
            <button class="drop" aria-label="自定义"><i class="caret caret-bar"></i></button>
        </div>
        <h1 class="app-title">NX 12.0.0.27 - 建模</h1>
        <span class="top-shade"></span>
    </header>

    <!-- 选项卡 -->
    <nav class="tabs">
        <button class="file-tab">文件(F)</button>
        <button>主页</button>
        <button>装配</button>
        <button>曲线</button>
        <button>分析</button>
        <button>曲面</button>
        <button>视图</button>
        <button>渲染</button>
        <button class="active">工具</button>
        <button>PMI</button>
        <button>应用模块</button>
        <button>内部</button>
    </nav>

    <!-- 功能区 -->
    <section class="ribbon">
        <div class="group group-util">
            <div class="group-tools">
                <button class="tool"><svg><use href="#expr"/></svg>表达式</button>
                <button class="tool"><svg><use href="#sheet"/></svg>电子表格</button>
                <button class="tool"><svg><use href="#family"/></svg>部件族</button>
                <button class="tool"><svg><use href="#transform"/></svg>变换</button>
                <button class="tool"><svg><use href="#move"/></svg>移动对象</button>
                <div class="more-wrap">
                    <button class="more open"><span class="more-icon"><svg><use href="#tools"/></svg></span>更多<i class="caret"></i></button>

                    <!-- 更多 下拉菜单 -->
                    <div class="more-menu">
                        <div class="menu-body">
                            <div class="menu-list">
                                <section>
                                    <h2>最近使用的</h2>
                                    <button><svg><use href="#wcs-abs"/></svg>WCS 设为绝对</button>
                                    <button><svg><use href="#wcs-orient"/></svg>WCS 定向</button>
                                    <button><svg><use href="#wcs-dyn"/></svg>WCS 动态</button>
                                </section>
                                <section>
                                    <h2>WCS</h2>
                                    <button><svg><use href="#wcs-dyn"/></svg>WCS 动态</button>
                                    <button><svg><use href="#wcs-origin"/></svg>WCS 原点</button>
                                    <button><svg><use href="#wcs-rotate"/></svg>旋转 WCS</button>
                                    <button><svg><use href="#wcs-orient"/></svg>WCS 定向</button>
                                    <button><svg><use href="#wcs-abs"/></svg>WCS 设为绝对</button>
                                    <button>
                                        <svg viewBox="0 0 16 16"><path d="M3 8V1M3 8l8-4M3 8l9 0" stroke="#999" fill="none" stroke-width="1.200"/><path d="M3 0L1 3h4zM11 2l-3 1 2 2z" fill="#888"/><path d="M15 6l-4-1 1 4z" fill="#e08050"/><text x="1" y="16" font-size="6" fill="#222">XC</text></svg>更改 WCS XC 方向
                                    </button>
                                    <button>
                                        <svg viewBox="0 0 16 16"><path d="M3 12V5M3 12l8-3M3 12l8 2" stroke="#999" fill="none" stroke-width="1.200"/><path d="M3 3L1 6h4zM12 8l-3 0 1 3z" fill="#888"/><path d="M14 14l-4-2 0 4z" fill="#d87850"/><text x="7" y="6" font-size="6" fill="#222">YC</text></svg>更改 WCS YC 方向
                                    </button>
                                    <button class="selected"><svg><use href="#wcs-show"/></svg>显示 WCS</button>
                                    <button><svg><use href="#wcs-save"/></svg>保存 WCS</button>
                                </section>
                                <section>
                                    <h2>属性/信息</h2>
                                    <button><svg><use href="#prop"/></svg>属性</button>
                                    <button><svg><use href="#objinfo"/></svg>对象信息</button>
                                    <button><svg><use href="#info"/></svg>显示信息窗口</button>
                                </section>
                                <section>
                                    <h2>材料</h2>
                                    <button><svg><use href="#mat-assign"/></svg>指派材料</button>
                                    <button><svg><use href="#mat-manage"/></svg>管理材料</button>
                                    <button><svg><use href="#mat-lib"/></svg>管理库材料</button>
                                </section>
                                <section>
                                    <h2>优化和灵敏度</h2>
                                    <button><svg><use href="#optim"/></svg>优化</button>
                                    <button><svg><use href="#sens"/></svg>灵敏度研究</button>
                                </section>
                            </div>
                            <div class="menu-scroll">
                                <button aria-label="向上滚动"><i class="caret caret-up caret-big"></i></button>
                                <button aria-label="向下滚动"><i class="caret caret-big"></i></button>
                            </div>
                        </div>
                        <div class="menu-grip"><svg viewBox="0 0 9 9"><path d="M5 0h2v2H5zM1 4h2v2H1zM5 4h2v2H5z" fill="#aaa"/></svg></div>
                    </div>
                </div>
            </div>
            <div class="group-name"><span>实用工具</span></div>
        </div>

        <div class="group">
            <div class="group-tools">
                <button class="tool"><svg><use href="#record"/></svg>录制</button>
                <div class="small-tools">
                    <button aria-label="暂停录制"><svg><use href="#film-pause"/></svg></button>
                    <button aria-label="停止录制"><svg><use href="#film-stop"/></svg></button>
                    <button aria-label="录制设置"><svg><use href="#film-edit"/></svg></button>
                </div>
            </div>
        </div>

        <div class="group">
            <div class="group-tools">
                <button class="tool"><svg><use href="#run-test"/></svg>执行当前测试</button>
                <div class="small-tools">
                    <button aria-label="测试日志"><svg><use href="#journal"/></svg></button>
                    <button aria-label="测试列表"><svg><use href="#journal-list"/></svg></button>
                </div>
            </div>
        </div>

        <div class="group group-reuse">
            <div class="group-tools">
                <button class="tool"><svg><use href="#bolt"/></svg>紧固件装配</button>
                <div class="more-wrap">
                    <button class="more"><span class="more-icon"><svg><use href="#books"/></svg></span>更多<i class="caret"></i></button>
                </div>
            </div>
            <div class="group-name"><span>重用库</span><i class="caret"></i></div>
        </div>

        <div class="group group-check">
            <div class="group-tools">
                <button class="tool"><svg><use href="#require"/></svg>需求验证</button>
                <button class="tool"><svg><use href="#play"/></svg>播放操作记录</button>
                <button class="tool"><svg><use href="#knowledge"/></svg>知识融合<br>应用模块</button>
            </div>
        </div>
    </section>

    <!-- 选择条 -->
    <div class="selbar">
        <button class="menu-btn"><svg><use href="#menu-icon"/></svg><span>菜单(<u>M</u>)</span><i class="caret"></i></button>
        <div class="filter">
            <select aria-label="类型过滤器"><option>无选择过滤器</option></select>
            <i class="caret caret-big"></i>
        </div>
        <button class="snap" aria-label="选择范围"><svg><use href="#cube-dim"/></svg></button>
        <div class="snaps">
            <button class="snap on" aria-label="启用捕捉点"><svg><use href="#s-point"/></svg></button>
            <button class="snap on" aria-label="端点"><svg><use href="#s-end"/></svg></button>
            <button class="snap on" aria-label="中点"><svg><use href="#s-mid"/></svg></button>
            <button class="snap" aria-label="控制点"><svg><use href="#s-ctrl"/></svg></button>
            <button class="snap on" aria-label="极点"><svg><use href="#s-poly"/></svg></button>
            <button class="snap on" aria-label="定义点"><svg><use href="#s-spline"/></svg></button>
            <button class="snap" aria-label="交点"><svg><use href="#s-int"/></svg></button>
            <button class="snap on" aria-label="圆弧中心"><svg><use href="#s-center"/></svg></button>
            <button class="snap" aria-label="象限点"><svg><use href="#s-quad"/></svg></button>
            <button class="snap on" aria-label="现有点"><svg><use href="#s-point"/></svg></button>
            <button class="snap on" aria-label="曲线上的点"><svg><use href="#s-oncurve"/></svg></button>
            <button class="snap" aria-label="面上的点"><svg><use href="#s-face"/></svg></button>
            <button class="snap" aria-label="小平面顶点"><svg><use href="#s-facet"/></svg></button>
            <button class="snap" aria-label="栅格点"><svg><use href="#s-grid"/></svg></button>
        </div>
        <div class="views">
            <button class="snap" aria-label="适合窗口"><svg><use href="#v-fit"/></svg></button>
            <button class="snap" aria-label="平移"><svg><use href="#v-pan"/></svg></button>
            <button class="snap" aria-label="旋转"><svg><use href="#v-rotate"/></svg></button>
            <button class="snap" aria-label="透视"><svg><use href="#v-persp"/></svg></button>
            <button class="snap" aria-label="编辑截面"><svg><use href="#v-dim"/></svg></button>
            <button class="snap split" aria-label="全屏"><svg><use href="#v-full"/></svg><i class="caret"></i></button>
            <button class="snap split" aria-label="定向视图"><svg><use href="#v-clip"/></svg><i class="caret"></i></button>
            <button class="snap split" aria-label="着色"><svg><use href="#v-cube"/></svg><i class="caret"></i></button>
            <button class="snap split" aria-label="剪切截面"><svg><use href="#v-section"/></svg><i class="caret"></i></button>
        </div>
    </div>

    <main class="workspace">
        <!-- 资源条 -->
        <nav class="rail">
            <button class="rail-gear" aria-label="资源条选项"><svg><use href="#r-gear"/></svg></button>
            <button aria-label="装配导航器"><svg><use href="#r-asm"/></svg></button>
            <button aria-label="约束导航器"><svg><use href="#r-constraint"/></svg></button>
            <button class="active" aria-label="部件导航器"><svg><use href="#r-part"/></svg></button>
            <button aria-label="重用库"><svg><use href="#books"/></svg></button>
            <button class="spaced" aria-label="HD3D 工具"><svg><use href="#r-web"/></svg></button>
            <button class="spaced" aria-label="Web 浏览器"><svg><use href="#r-page"/></svg></button>
            <button class="spaced" aria-label="历史记录"><svg><use href="#r-clock"/></svg></button>
            <button aria-label="系统材料"><svg><use href="#r-color"/></svg></button>
            <button aria-label="Process Studio"><svg><use href="#r-render"/></svg></button>
            <button aria-label="加工向导"><svg><use href="#r-tools"/></svg></button>
        </nav>

        <!-- 部件导航器 -->
        <aside class="navigator">
            <h2>部件导航器</h2>
            <div class="tree-box">
                <table class="tree">
                    <thead>
                        <tr><th class="col-name">名称<i class="caret caret-up caret-sort"></i></th><th class="col-info"></th><th></th></tr>
                    </thead>
                    <tbody>
                        <tr><td><div class="node"><button class="expander link" aria-label="展开">+</button><svg><use href="#t-view"/></svg><span>模型视图</span></div></td><td></td><td></td></tr>
                        <tr><td><div class="node checked"><button class="expander link" aria-label="展开">+</button><svg><use href="#t-check"/></svg><svg><use href="#t-camera"/></svg><span>摄像机</span></div></td><td></td><td></td></tr>
                        <tr><td><div class="node"><button class="expander" aria-label="折叠">−</button><svg><use href="#t-folder"/></svg><span>模型历史记录</span></div></td><td></td><td></td></tr>
                        <tr><td><div class="node leaf"><input type="checkbox" id="csys" checked><svg><use href="#t-csys"/></svg><label for="csys">基准坐标系 (0)</label></div></td><td></td><td></td></tr>
                        <tr><td></td><td></td><td></td></tr>
                        <tr><td></td><td></td><td></td></tr>
                        <tr><td></td><td></td><td></td></tr>
                        <tr><td></td><td></td><td></td></tr>
                        <tr><td></td><td></td><td></td></tr>
                        <tr><td></td><td></td><td></td></tr>
                        <tr><td></td><td></td><td></td></tr>
                        <tr><td></td><td></td><td></td></tr>
                        <tr><td></td><td></td><td></td></tr>
                        <tr><td></td><td></td><td></td></tr>
                        <tr><td></td><td></td><td></td></tr>
                        <tr><td></td><td></td><td></td></tr>
                        <tr><td></td><td></td><td></td></tr>
                        <tr><td></td><td></td><td></td></tr>
                        <tr><td></td><td></td><td></td></tr>
                        <tr><td></td><td></td><td></td></tr>
                        <tr><td></td><td></td><td></td></tr>
                        <tr><td></td><td></td><td></td></tr>
                        <tr><td></td><td></td><td></td></tr>
                        <tr><td></td><td></td><td></td></tr>
                        <tr><td></td><td></td><td></td></tr>
                        <tr><td></td><td></td><td></td></tr>
                        <tr><td></td><td></td><td></td></tr>
                        <tr><td></td><td></td><td></td></tr>
                        <tr><td></td><td></td><td></td></tr>
                        <tr><td></td><td></td><td></td></tr>
                    </tbody>
                </table>
            </div>
        </aside>

        <!-- 图形窗口 -->
        <section class="graphics">
            <div class="cue-line"></div>
            <div class="canvas">
                <svg class="csys" viewBox="0 0 170 200">
                    <g fill="none" stroke="#1414d8">
                        <path d="M32.500 36v109M84.500 67v62" stroke="#7c7cd8"/>
                        <path d="M32 82.500L84 67.500M32 82.500L74.500 102.500M84 129l42 19-51 16"/>
                        <path d="M74.500 102v62" stroke-width="1.200"/>
                        <path d="M32 145l92-28M32 145l76 35"/>
                        <path d="M25 145.500h15M32 139v13" stroke="#0808b0" stroke-width="1.800"/>
                    </g>
                    <path d="M32 22l3 14h-6zM135 113l-14 1 2 6zM116 184l-10-8-2 6z" fill="#0c0cc0"/>
                    <path d="M32 94l2 10-1 41h-2l-1-41z" fill="#1040c8"/>
                    <path d="M34 144l24-11 16-1-6 4-10 3z" fill="#38a038"/>
                    <path d="M34 146l21 7 13 8-10-1-6-4z" fill="#cc3030"/>
                    <g fill="#1c1cd8" font-size="13"><text x="28" y="20">Z</text><text x="136" y="116">Y</text><text x="116" y="190">X</text></g>
                    <g font-size="13"><text x="36" y="92" fill="#3450d0">ZC</text><text x="60" y="127" fill="#3c9c44">YC</text><text x="52" y="175" fill="#c83c3c">XC</text></g>
                </svg>
            </div>
        </section>
    </main>
</body>
</html>
```
FILE: styles.css
```css
* {
    box-sizing: border-box;
}
body {
    margin: 0;
    height: 100vh;
    display: flex;
    flex-direction: column;
    overflow: hidden;
    font-family: "Open Sans", "Noto Sans CJK SC", sans-serif;
    font-size: 11px;
    line-height: 16px;
    color: #1a1a1a;
    background-color: #fff;
}
button {
    font: inherit;
    color: inherit;
    padding: 0;
    border: none;
    background: none;
    white-space: nowrap;
}
h1, h2 {
    margin: 0;
    font-weight: normal;
}
svg {
    display: block;
    flex: none;
    width: 16px;
    height: 16px;
}
.icon-defs {
    position: absolute;
    width: 0;
    height: 0;
}

/* 小三角 */
.caret {
    display: block;
    flex: none;
    width: 7px;
    height: 4px;
    background-color: #111;
    clip-path: polygon(0 0, 100% 0, 50% 100%);
}
.caret-big {
    width: 9px;
    height: 5px;
}
.caret-dim {
    background-color: #aaa;
}
.caret-up {
    clip-path: polygon(50% 0, 100% 100%, 0 100%);
}
.caret-bar {
    width: 7px;
    height: 6px;
    clip-path: polygon(0 0, 100% 0, 100% 1px, 0 1px, 0 3px, 100% 3px, 50% 100%, 0 3px);
}

/* 标题栏 */
.titlebar {
    position: relative;
    display: flex;
    align-items: center;
    height: 26px;
    flex: none;
    padding-left: 4px;
}
.logo {
    font-family: "Liberation Sans", Arial, sans-serif;
    font-size: 22px;
    line-height: 26px;
    font-weight: bold;
    color: #8799a8;
    width: 37px;
}
.quick {
    display: flex;
    align-items: center;
    gap: 7px;
    height: 20px;
    padding: 0 6px;
    border-left: 1px solid #d4d4d4;
}
.quick:nth-child(2) {
    padding: 0 6px 0 9px;
}
.quick button {
    display: flex;
    align-items: center;
    gap: 4px;
}
.quick .drop {
    width: 7px;
    margin: 0 -1px;
}
.app-title {
    font-size: 12px;
    margin: 0 auto;
    padding-left: 250px;
}
.top-shade {
    position: absolute;
    top: -4px;
    right: 0;
    width: 190px;
    height: 4px;
    box-shadow: 0 0 3px #777;
}

/* 选项卡 */
.tabs {
    display: flex;
    flex: none;
    height: 28px;
    background-color: #dcdcdc;
    font-size: 13px;
}
.tabs button {
    padding: 0 13px;
}
.tabs .file-tab {
    width: 81px;
    margin-right: 2px;
    background-color: #539fb8;
    color: #fff;
}
.tabs .active {
    background-color: #fff;
    color: #0f6580;
}

/* 功能区 */
.ribbon {
    display: flex;
    flex: none;
    height: 94px;
    padding-top: 3px;
    border-bottom: 1px solid #d8d8d8;
}
.group {
    display: flex;
    flex-direction: column;
    height: 87px;
    padding: 0 11px 0 8px;
    border-right: 1px solid #d8d8d8;
}
.group-util {
    padding: 0 2px 0 9px;
}
.group-reuse {
    padding: 0 2px 0 8px;
}
.group-check {
    padding: 0 5px;
}
.group-tools {
    display: flex;
    flex: none;
    height: 73px;
}
.tool {
    display: flex;
    flex-direction: column;
    align-items: center;
    padding: 2px 4px 0;
}
.tool svg {
    width: 32px;
    height: 32px;
    margin-bottom: 4px;
}
.small-tools {
    display: flex;
    flex-direction: column;
    gap: 6px;
    margin-left: 4px;
    padding-top: 2px;
}
.small-tools button {
    height: 16px;
}
.more-wrap {
    position: relative;
    margin-left: 6px;
}
.group-util .more-wrap {
    margin-left: 10px;
}
.more {
    display: flex;
    flex-direction: column;
    align-items: center;
    width: 41px;
    height: 72px;
    padding-top: 1px;
}
.more-icon {
    display: flex;
    align-items: center;
    justify-content: center;
    width: 37px;
    height: 35px;
    margin-bottom: 3px;
    border: 1px solid #dcdcdc;
    border-radius: 3px;
}
.more .caret {
    margin-top: 5px;
}
.open {
    background-color: #cde5eb;
}
.open .more-icon {
    border-color: #e6f3f6;
}
.group-name {
    display: flex;
    align-items: center;
    flex: none;
    height: 16px;
    padding-right: 6px;
    color: #10627c;
}
.group-name span {
    flex: 1;
    padding-right: 10px;
    text-align: center;
}
.group-util .group-name {
    padding-right: 14px;
}

/* 更多 下拉菜单 */
.more-menu {
    position: absolute;
    top: 73px;
    left: -1px;
    z-index: 10;
    width: 259px;
    padding: 2px;
    border: 1px solid #999;
    background-color: #fff;
    box-shadow: 2px 2px 3px rgba(0, 0, 0, 0.6);
}
.menu-body {
    display: flex;
}
.menu-list {
    width: 236px;
}
.menu-list section {
    display: grid;
    grid-template-columns: 1fr 1fr;
    padding-bottom: 1px;
    border-top: 1px solid #d8d8d8;
}
.menu-list h2 {
    grid-column: 1 / 3;
    height: 21px;
    padding-left: 6px;
    font-size: 13px;
    line-height: 22px;
    color: #10627c;
}
.menu-list button {
    display: flex;
    align-items: center;
    gap: 4px;
    height: 22px;
    padding-left: 3px;
}
.menu-list .selected {
    padding-left: 2px;
    border: 1px solid #b0d4dc;
    background-color: #cde5eb;
}
.menu-scroll {
    display: flex;
    flex: 1;
    flex-direction: column;
    justify-content: space-between;
    align-items: center;
}
.menu-scroll button {
    display: flex;
    align-items: center;
    height: 18px;
}
.menu-grip {
    display: flex;
    justify-content: flex-end;
    align-items: center;
    height: 10px;
    background-color: #dcdcdc;
}
.menu-grip svg {
    width: 9px;
    height: 9px;
}

/* 选择条 */
.selbar {
    display: flex;
    align-items: center;
    flex: none;
    height: 32px;
    border-bottom: 1px solid #86949a;
}
.menu-btn {
    display: flex;
    align-items: center;
    gap: 4px;
    width: 87px;
    height: 24px;
    padding-left: 10px;
    border-right: 1px solid #d8d8d8;
}
.filter {
    display: grid;
    align-items: center;
    width: 133px;
    margin: 0 6px 0 12px;
}
.filter select {
    grid-area: 1 / 1;
    appearance: none;
    height: 20px;
    padding: 0 2px;
    border: 1px solid #999;
    border-radius: 0;
    background-color: #fff;
    font: inherit;
    color: inherit;
}
.filter .caret {
    grid-area: 1 / 1;
    justify-self: end;
    margin-right: 5px;
    pointer-events: none;
}
.snap {
    display: flex;
    align-items: center;
    justify-content: center;
    width: 23px;
    height: 22px;
}
.snap.on {
    border: 1px solid #b0d4dc;
    background-color: #cde5eb;
}
.snaps {
    display: flex;
    gap: 2px;
    margin-left: 221px;
}
.views {
    display: flex;
    gap: 2px;
    height: 24px;
    align-items: center;
    margin-left: 7px;
    padding: 0 7px 0 8px;
    border: solid #d8d8d8;
    border-width: 0 1px;
}
.split {
    gap: 7px;
    width: 35px;
}

/* 工作区 */
.workspace {
    display: flex;
    flex: 1;
    min-height: 0;
}
.rail {
    display: flex;
    flex-direction: column;
    align-items: stretch;
    width: 32px;
    flex: none;
    background-color: #dcdcdc;
    border-right: 1px solid #a4a4a4;
}
.rail button {
    display: flex;
    align-items: center;
    justify-content: center;
    flex: none;
    height: 42px;
    padding-left: 4px;
}
.rail svg {
    width: 24px;
    height: 24px;
}
.rail .rail-gear {
    height: 26px;
    margin-bottom: 16px;
    padding-left: 0;
}
.rail-gear svg {
    width: 16px;
    height: 16px;
}
.rail .active {
    height: 46px;
    margin: -2px -1px -2px 2px;
    padding-left: 2px;
    border: 1px solid #a4a4a4;
    border-right: none;
    background-color: #fff;
}
.rail .spaced {
    margin-top: 12px;
}

/* 部件导航器 */
.navigator {
    display: flex;
    flex-direction: column;
    width: 332px;
    flex: none;
    padding: 0 9px 0 6px;
    border-right: 1px solid #86949a;
    font-size: 12px;
}
.navigator h2 {
    height: 28px;
    padding-left: 4px;
    font-size: 12px;
    line-height: 29px;
}
.tree-box {
    flex: 1;
    min-height: 0;
    overflow: hidden;
    padding: 2px 1px 0;
    border: 1px solid #d8d8d8;
    border-bottom: none;
}
.tree {
    width: 100%;
    table-layout: fixed;
    border-collapse: separate;
    border-spacing: 0;
}
.tree th, .tree td {
    height: 20px;
    padding: 0 0 0 5px;
    border-right: 1px solid #e8e8e8;
    border-bottom: 1px solid #e8e8e8;
}
.tree th {
    padding-left: 6px;
    background-color: #efefef;
    border-color: #d0d0d0;
    font-weight: normal;
    text-align: left;
}
.tree th:last-child, .tree td:last-child {
    border-right: none;
}
.tree tbody tr:nth-child(even) {
    background-color: #f9f9f9;
}
.tree .col-name {
    width: 200px;
}
.tree .col-info {
    width: 100px;
}
.caret-sort {
    display: inline-block;
    width: 10px;
    height: 5px;
    margin-left: 17px;
    vertical-align: middle;
}
.node {
    display: flex;
    align-items: center;
    height: 19px;
}
.node span {
    margin-left: 4px;
}
.node.checked span {
    margin-left: 3px;
}
.expander {
    position: relative;
    width: 9px;
    height: 9px;
    margin-right: 4px;
    border: 1px solid #c4c4c4;
    font-size: 10px;
    line-height: 6px;
    font-weight: bold;
}
.expander.link::after {
    content: "";
    position: absolute;
    top: 9px;
    left: 3px;
    height: 9px;
    border-left: 1px dotted #999;
}
.leaf {
    padding-left: 23px;
    font-weight: bold;
}
.leaf::before {
    content: "";
    width: 9px;
    height: 10px;
    margin: 0 3px 9px 0;
    border: dotted #aaa;
    border-width: 0 0 1px 1px;
}
.leaf input {
    appearance: none;
    width: 12px;
    height: 12px;
    margin: 0 2px 0 0;
    border: 1px solid #111;
    background-color: #fff;
}
.leaf input:checked::before {
    content: "";
    display: block;
    width: 10px;
    height: 10px;
    background-color: #18b038;
    clip-path: polygon(0 50%, 25% 40%, 40% 65%, 85% 5%, 100% 5%, 50% 100%, 30% 100%);
}
.leaf label {
    margin-left: 2px;
}

/* 图形窗口 */
.graphics {
    display: flex;
    flex-direction: column;
    flex: 1;
}
.cue-line {
    height: 23px;
    border-bottom: 2px solid #5a9aac;
}
.canvas {
    position: relative;
    flex: 1;
    background: linear-gradient(#b5b5b6, #e8e9ea);
}
.csys {
    position: absolute;
    right: 237px;
    bottom: 160px;
    width: 170px;
    height: 200px;
    font-family: "Liberation Sans", Arial, sans-serif;
}
```
